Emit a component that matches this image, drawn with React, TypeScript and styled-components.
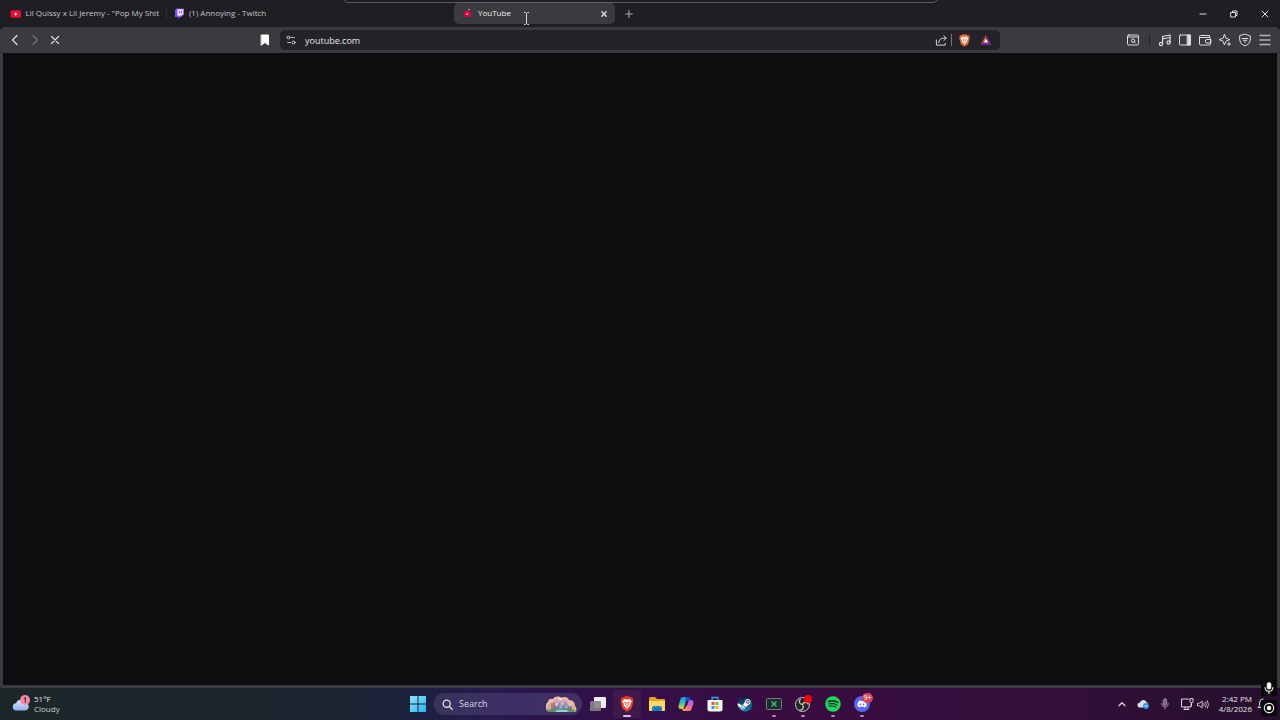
import React from "react";
import styled, { createGlobalStyle } from "styled-components";
import { FaDiscord, FaSpotify } from "react-icons/fa";

const GlobalStyle = createGlobalStyle`
  * { box-sizing: border-box; }
  body {
    margin: 0;
    background: #0e0e10;
    color: #e6e5e8;
    font-family: "Open Sans", "Noto Sans", sans-serif;
    font-size: 8px;
    line-height: 10px;
  }
  button, input { font: inherit; color: inherit; }
`;

const Desktop = styled.div`
  position: relative;
  display: flex;
  flex-direction: column;
  min-height: 100vh;
  overflow: hidden;
`;

const Browser = styled.div`
  flex: 1;
  display: flex;
  flex-direction: column;
  background: #1f1e23;
`;

const ShareBar = styled.div`
  position: absolute;
  top: -8px;
  left: 50%;
  width: 595px;
  height: 11px;
  margin-left: -297px;
  border: 1px solid #5d5c61;
  border-radius: 5px;
  background: #1f1e23;
`;

const TabStrip = styled.div`
  display: flex;
  align-items: center;
  height: 27px;
`;

const Tab = styled.div<{ $active?: boolean }>`
  display: flex;
  align-items: center;
  gap: 4px;
  width: 161px;
  height: 21px;
  padding: 0 6px;
  border-radius: 5px;
  color: ${(p) => (p.$active ? "#f2f1f4" : "#c6c5ca")};
  background: ${(p) => (p.$active ? "#3b3a3f" : "transparent")};
`;

const Tabs = styled.div`
  display: flex;
  align-items: center;
  gap: 1px;
  flex: none;
  width: 454px;
  padding-left: 4px;
`;

const TabLink = styled.a`
  flex: 1;
  padding-bottom: 2px;
  color: inherit;
  text-decoration: none;
  white-space: nowrap;
`;

const Divider = styled.span<{ $color: string }>`
  flex: none;
  width: 1px;
  height: 12px;
  background: ${(p) => p.$color};
`;

const IconButton = styled.button<{ $width?: number; $dim?: boolean }>`
  display: flex;
  align-items: center;
  justify-content: center;
  flex: none;
  width: ${(p) => p.$width ?? 20}px;
  height: 20px;
  padding: 0;
  border: 0;
  background: transparent;
  color: ${(p) => (p.$dim ? "#77767b" : "#dddce0")};
`;

const WindowControls = styled.div`
  display: flex;
  margin-left: auto;
`;

const Toolbar = styled.div`
  display: grid;
  grid-template-columns: 1fr minmax(0, 720px) 1fr;
  align-items: center;
  height: 26px;
  border-radius: 5px 5px 0 0;
  background: #3b3a3f;
`;

const ToolGroup = styled.div<{ $end?: boolean }>`
  display: flex;
  align-items: center;
  justify-content: ${(p) => (p.$end ? "flex-end" : "space-between")};
  padding: 0 5px;
`;

const Row = styled.div`
  display: flex;
  align-items: center;
`;

const DividerSlot = styled.span`
  display: flex;
  justify-content: center;
  width: 12px;
`;

const AddressBar = styled.form`
  display: flex;
  align-items: center;
  height: 20px;
  padding: 0 4px 0 1px;
  border-radius: 5px;
  background: #242329;
`;

const AddressInput = styled.input`
  flex: 1;
  min-width: 0;
  height: 18px;
  padding: 0 0 0 4px;
  border: 0;
  outline: 0;
  background: transparent;
  font-size: 9px;
`;

const Page = styled.main`
  flex: 1;
  border: solid #3b3a3f;
  border-width: 0 3px 3px;
  background: #0e0e10;
`;

const Taskbar = styled.footer`
  display: grid;
  grid-template-columns: 1fr auto 1fr;
  align-items: center;
  height: 32px;
  background: linear-gradient(90deg, #1d2628 0%, #1b2530 26%, #1c2140 33%, #281a4e 38%, #330f48 48%, #380d40 62%, #340f3b 80%, #260f2c 100%);
`;

const Weather = styled.button`
  display: flex;
  align-items: center;
  gap: 4px;
  justify-self: start;
  height: 32px;
  padding: 0 12px;
  border: 0;
  background: transparent;
  text-align: left;
`;

const Muted = styled.span`
  color: #c9ccce;
`;

const Stack = styled.span<{ $right?: boolean }>`
  display: flex;
  flex-direction: column;
  text-align: ${(p) => (p.$right ? "right" : "left")};
`;

const Dock = styled.nav`
  display: flex;
  align-items: center;
  gap: 2px;
`;

const SearchBox = styled.label`
  display: flex;
  align-items: center;
  gap: 6px;
  width: 148px;
  height: 22px;
  padding: 0 4px 0 8px;
  border-radius: 11px;
  background: linear-gradient(90deg, #38335c, #3d2f66 60%, #43305f);
`;

const SearchInput = styled.input`
  flex: 1;
  min-width: 0;
  padding: 0;
  border: 0;
  outline: 0;
  background: transparent;
  font-size: 9px;
  &::placeholder { color: #dcd6e6; opacity: 1; }
`;

const Apps = styled.div`
  display: flex;
  justify-content: space-between;
  width: 292px;
`;

const AppButton = styled.button<{ $state?: "open" | "active" }>`
  position: relative;
  display: flex;
  align-items: center;
  justify-content: center;
  width: 28px;
  height: 28px;
  padding: 0;
  border: 0;
  border-radius: 3px;
  background: ${(p) => (p.$state === "active" ? "#3d1a49" : "transparent")};
  &::after {
    content: "";
    display: ${(p) => (p.$state ? "block" : "none")};
    position: absolute;
    bottom: 1px;
    width: ${(p) => (p.$state === "active" ? 8 : 4)}px;
    height: 2px;
    border-radius: 1px;
    background: ${(p) => (p.$state === "active" ? "#e3b9e8" : "#a58fab")};
  }
`;

const Badge = styled.span`
  position: absolute;
  top: 3px;
  right: 3px;
  width: 11px;
  height: 10px;
  border-radius: 5px;
  background: #d8435a;
  color: #fff;
  font-size: 7px;
  text-align: center;
`;

const Tray = styled.div`
  display: flex;
  align-items: center;
  justify-content: flex-end;
  padding-right: 10px;
`;

const Clock = styled.time`
  margin: 0 4px 0 10px;
`;

const CaptureStatus = styled.div`
  position: absolute;
  right: 3px;
  bottom: 4px;
  display: flex;
  flex-direction: column;
  gap: 4px;
`;

const StatusTile = styled.span`
  display: flex;
  align-items: center;
  justify-content: center;
  width: 16px;
  height: 16px;
  background: #0b090c;
`;

const Pointer = styled.svg`
  position: absolute;
  top: 12px;
  left: 523px;
`;

type IconProps = { size?: number; children: React.ReactNode; width?: number };
const Icon = ({ size = 14, children, width = 1 }: IconProps) => (
  <svg width={size} height={size} viewBox="0 0 14 14" fill="none" stroke="currentColor" strokeWidth={width} strokeLinecap="round" strokeLinejoin="round" aria-hidden="true">
    {children}
  </svg>
);

const YouTubeIcon = () => (
  <svg width="12" height="10" viewBox="0 0 12 10" aria-hidden="true">
    <rect x="0.5" y="1" width="11" height="8" rx="2" fill="#f00939" />
    <path d="M5 3.3v3.4L8 5z" fill="#fff" />
  </svg>
);

const TwitchIcon = () => (
  <svg width="11" height="12" viewBox="0 0 11 12" aria-hidden="true">
    <path d="M2.500 0.500H10v6L7.500 9H6l-2 2V9H1V2z" fill="#8447f0" />
    <path d="M3.300 1.300h6v4.600L7.600 7.400H6L4.700 8.600V7.400H3.300z" fill="#e9dffb" />
    <path d="M5.300 3v2.300M7.500 3v2.300" stroke="#8447f0" />
  </svg>
);

const LoadingIcon = () => (
  <svg width="14" height="12" viewBox="0 0 14 12" aria-hidden="true">
    <rect x="4" y="3" width="7" height="6" rx="1" fill="#cb083f" />
    <path d="M6.500 4.800v2.400L8.700 6z" fill="#f5b6c6" />
    <circle cx="9" cy="1.500" r="0.800" fill="#bbb" />
  </svg>
);

const BatIcon = () => (
  <svg width="12" height="12" viewBox="0 0 12 12" aria-hidden="true">
    <path d="M6 1 0.500 11 6 7z" fill="#ec4b32" />
    <path d="M6 1 11.500 11 7.500 8z" fill="#9e2a8c" />
    <path d="M0.500 11h11L8 8H4z" fill="#662d91" />
    <path d="M6 4.600 3.800 8.600h4.400z" fill="#fff" />
  </svg>
);

const BraveIcon = ({ size, color }: { size: number; color: string }) => (
  <svg width={size} height={size} viewBox="0 0 24 24" aria-hidden="true">
    <path d="M7 2 9 0.500h6L17 2l2.500-.3L21.500 4l-.6 2 .8 2-2.500 9.500q-.4 1.500-1.700 2.400L12 23.500l-5.500-3.600q-1.300-.9-1.700-2.400L2.300 8l.8-2-.6-2 2-2.300z" fill={color} />
    <path d="M8 4.500 12 5.500l4-1 3.300 3.700-2.800 4.300 1 1.500-2.500 2.300L12 19.500l-3-3.200L6.500 14l1-1.500-2.800-4.300z" fill="#fff" />
    <path d="M7.800 9l3 1-.8 3.200M16.200 9l-3 1 .8 3.200M10 14.500l2 1 2-1" fill="none" stroke={color} strokeWidth="1.400" />
  </svg>
);

const WeatherIcon = () => (
  <svg width="18" height="18" viewBox="0 0 18 18" aria-hidden="true">
    <defs>
      <linearGradient id="cloud" x1="0" y1="0" x2="0" y2="1">
        <stop offset="0" stopColor="#dce8fb" />
        <stop offset="1" stopColor="#8db0ef" />
      </linearGradient>
    </defs>
    <path d="M4.500 15.500a3.600 3.600 0 0 1-.3-7.200 4.500 4.500 0 0 1 8.600-.2 3.700 3.700 0 0 1 .4 7.400z" fill="url(#cloud)" />
    <circle cx="13" cy="5" r="5" fill="#f48aa6" />
    <path d="M11.800 3.500 13.300 2.500V7.700" fill="none" stroke="#3b2030" />
  </svg>
);

const StartIcon = () => (
  <svg width="16" height="16" viewBox="0 0 16 16" aria-hidden="true">
    <defs>
      <linearGradient id="win" x1="0" y1="0" x2="1" y2="1">
        <stop offset="0" stopColor="#8be5fb" />
        <stop offset="1" stopColor="#2fb4ee" />
      </linearGradient>
    </defs>
    <path d="M0 0h7.500v7.500H0zM8.500 0H16v7.500H8.500zM0 8.500h7.500V16H0zM8.500 8.500H16V16H8.500z" fill="url(#win)" />
  </svg>
);

const SearchArt = () => (
  <svg width="33" height="18" viewBox="0 0 33 18" aria-hidden="true">
    <path d="M2 16C0 12 1 8 3 7c0-3 3-4 5-3 2-3 6-3 8-1 3-2 7-1 8 2 4 0 6 3 6 6 2 2 2 5 0 6z" fill="#e9bba9" />
    <path d="M9 6c1-3 5-3 7-1 3-2 6 0 7 2l-3 2-4-2-4 2z" fill="#cda0c4" />
    <path d="M8 15l2-5 2 2 3-5 3 4 3-4 3 4 3 4z" fill="#6f7cab" />
    <path d="M15 7l2 3 1 5h-4zM21 7l2 4-1 4h-3z" fill="#a3a6cb" />
    <path d="M12 4l3-2 3 2-2 2z" fill="#f7dab0" />
    <path d="M1 15c4-2 7 0 11-1s12-1 19 1l-2 2H3z" fill="#5f9463" />
    <path d="M12 15h9l3 2H10z" fill="#8fd2de" />
    <path d="M3 10l2-2 1 6-2 1-2-2zM27 9l2 1 1 4-2 1z" fill="#dfa48e" />
    <path d="M7 8v7M9 7v7M26 11v4" stroke="#57465f" />
  </svg>
);

const TaskViewIcon = () => (
  <svg width="18" height="16" viewBox="0 0 18 16" aria-hidden="true">
    <rect x="5" y="1" width="12" height="11" rx="1" fill="#f1edf2" />
    <rect x="1" y="5" width="11" height="10" rx="1" fill="#8a8389" opacity="0.900" />
  </svg>
);

const FolderIcon = () => (
  <svg width="18" height="16" viewBox="0 0 18 16" aria-hidden="true">
    <path d="M1 2.500Q1 1 2.500 1H7l2 2h7q1 0 1 1v3H1z" fill="#e5a52b" />
    <path d="M1 5h16v9q0 1-1 1H2q-1 0-1-1z" fill="#ffd765" />
    <path d="M4 15v-3q0-2 2-2h6q2 0 2 2v3z" fill="#2384cd" />
    <path d="M6 13h6" stroke="#145c9e" />
  </svg>
);

const CopilotIcon = () => (
  <svg width="16" height="16" viewBox="0 0 16 16" aria-hidden="true">
    <defs>
      <linearGradient id="copA" x1="0" y1="0" x2="0" y2="1">
        <stop offset="0" stopColor="#2a8cf0" />
        <stop offset="0.500" stopColor="#38c3a6" />
        <stop offset="1" stopColor="#f5cf43" />
      </linearGradient>
      <linearGradient id="copB" x1="0" y1="0" x2="0" y2="1">
        <stop offset="0" stopColor="#8c6bf5" />
        <stop offset="0.500" stopColor="#e45fb5" />
        <stop offset="1" stopColor="#fa8760" />
      </linearGradient>
    </defs>
    <path d="M5 1h5.500Q9 1.500 8.500 3L6 11.500Q5.500 13 4 13H3Q0 13 .6 9.500L2.500 3Q3 1 5 1z" fill="url(#copA)" />
    <path d="M8 1h2.500q1.500 0 2 2l.5 1.500h-2.500q-1.500 0-2 1.500L7 8z" fill="#1b50c4" />
    <path d="M11 15H6q1.500-.5 2-2l2.300-7.500Q10.800 4 12 4h1q3 0 2.400 3.500L13.500 13q-.5 2-2.500 2z" fill="url(#copB)" />
    <path d="M7.500 15H6q-1.500 0-2-2h1.500Q7 13 7.500 11.500L9 9v2.500z" fill="#f6a24c" />
  </svg>
);

const StoreIcon = () => (
  <svg width="16" height="16" viewBox="0 0 16 16" aria-hidden="true">
    <path d="M5 4V1.500h6V4" fill="none" stroke="#3aa2e8" strokeWidth="1.300" />
    <path d="M0.500 4h15v9q0 2.500-2.500 2.500H3Q.5 15.500.5 13z" fill="#f4f5f8" />
    <path d="M4.500 6h3v3h-3z" fill="#f2502b" />
    <path d="M8.500 6h3v3h-3z" fill="#7fba1c" />
    <path d="M4.500 10h3v3h-3z" fill="#1a9fe8" />
    <path d="M8.500 10h3v3h-3z" fill="#fbb713" />
  </svg>
);

const SteamIcon = () => (
  <svg width="16" height="16" viewBox="0 0 16 16" aria-hidden="true">
    <defs>
      <linearGradient id="steam" x1="0" y1="0" x2="0" y2="1">
        <stop offset="0" stopColor="#151a3a" />
        <stop offset="1" stopColor="#1684b9" />
      </linearGradient>
    </defs>
    <circle cx="8" cy="8" r="7.500" fill="url(#steam)" />
    <path d="M0.600 7.300 4.500 9l1.500-.2 2.300-3.300 4 2.800-3.800 2.900a2.600 2.600 0 0 1-5.100.2L.9 10z" fill="#fff" />
    <circle cx="10.700" cy="5.800" r="2.900" fill="#fff" />
    <circle cx="10.700" cy="5.800" r="1.700" fill="#b9c4d6" stroke="#24406c" strokeWidth="0.700" />
    <circle cx="6" cy="10.900" r="1.500" fill="#fff" stroke="#24567c" strokeWidth="0.700" />
  </svg>
);

const XboxBarIcon = () => (
  <svg width="16" height="12" viewBox="0 0 16 12" aria-hidden="true">
    <rect x="0.500" y="0.500" width="15" height="11" rx="1" fill="#183029" stroke="#6f7d76" />
    <path d="M5.500 3.500l5 5M10.500 3.500l-5 5" stroke="#62b588" strokeWidth="1.200" />
  </svg>
);

const ObsIcon = () => (
  <svg width="18" height="18" viewBox="0 0 18 18" aria-hidden="true">
    <circle cx="8.500" cy="9.500" r="7" fill="#262427" stroke="#c9c6ca" />
    <path d="M8.500 9.500C5 9 4.500 6 6.500 4M8.500 9.500c1.500-3 4.500-3 6 0M8.500 9.500c2 3 0 6-3 5.500" fill="none" stroke="#c9c6ca" strokeWidth="1.300" />
    <circle cx="14" cy="4" r="4" fill="#f2060e" />
  </svg>
);

const SpotifyIcon = () => (
  <svg width="16" height="16" viewBox="0 0 16 16" aria-hidden="true">
    <circle cx="8" cy="8" r="7" fill="#10291a" />
    <FaSpotify size={16} color="#1ed760" />
  </svg>
);

const DiscordIcon = () => (
  <svg width="16" height="16" viewBox="0 0 16 16" aria-hidden="true">
    <circle cx="8" cy="8" r="8" fill="#5865f2" />
    <FaDiscord x={3} y={3} size={10} color="#fff" />
  </svg>
);

const OneDriveIcon = () => (
  <svg width="14" height="14" viewBox="0 0 14 14" aria-hidden="true">
    <path d="M3 10.500a2.500 2.500 0 0 1 0-5 3.500 3.500 0 0 1 6.500-.5A2.800 2.800 0 0 1 11 8v2.500z" fill="#e1dbe4" />
    <circle cx="9" cy="9" r="3" fill="#2c8fde" />
    <path d="M7.600 9h2.800" stroke="#fff" />
  </svg>
);

export default function App() {
  return (
    <Desktop>
      <GlobalStyle />
      <Browser>
        <TabStrip>
          <Tabs>
            <Tab>
              <YouTubeIcon />
              <TabLink href="#">Lil Quissy x Lil Jeremy - "Pop My Shit</TabLink>
            </Tab>
            <Divider $color="#2e2d32" />
            <Tab>
              <TwitchIcon />
              <TabLink href="#">(1) Annoying - Twitch</TabLink>
            </Tab>
          </Tabs>
          <Tab $active>
            <LoadingIcon />
            <TabLink href="#">YouTube</TabLink>
            <IconButton $width={10} aria-label="Close tab">
              <Icon size={10} width={2}><path d="M4 4l6 6M10 4l-6 6" /></Icon>
            </IconButton>
          </Tab>
          <IconButton $width={28} $dim aria-label="New tab">
            <Icon size={12} width={1.2}><path d="M7 3v8M3 7h8" stroke="#aaa9ae" /></Icon>
          </IconButton>
          <WindowControls>
            <IconButton $width={31} aria-label="Minimize"><Icon><path d="M4 7h6" /></Icon></IconButton>
            <IconButton $width={31} aria-label="Restore">
              <Icon><path d="M4 5.500h4.500V10H4zM5.500 5.500V4H10v4.500H8.500" /></Icon>
            </IconButton>
            <IconButton $width={31} aria-label="Close"><Icon><path d="M4 4l6 6M10 4l-6 6" /></Icon></IconButton>
          </WindowControls>
        </TabStrip>
        <Toolbar>
          <ToolGroup>
            <Row>
              <IconButton aria-label="Back"><Icon width={1.2}><path d="M9 2.500 4.500 7 9 11.500" /></Icon></IconButton>
              <IconButton $dim aria-label="Forward"><Icon width={1.2}><path d="M5 2.500 9.500 7 5 11.500" /></Icon></IconButton>
              <IconButton aria-label="Stop loading"><Icon width={1.2}><path d="M3.500 3.500l7 7M10.500 3.500l-7 7" /></Icon></IconButton>
            </Row>
            <IconButton aria-label="Bookmark">
              <Icon><path d="M3.500 2h7v10L7 9.500 3.500 12z" fill="#fff" stroke="#fff" /></Icon>
            </IconButton>
          </ToolGroup>
          <AddressBar>
            <IconButton type="button" aria-label="Site settings">
              <Icon size={12}>
                <circle cx="4" cy="4" r="1.700" /><path d="M7.500 4H11M3 10h3.500" /><circle cx="10" cy="10" r="1.700" />
              </Icon>
            </IconButton>
            <AddressInput aria-label="Address" defaultValue="youtube.com" />
            <IconButton type="button" aria-label="Share">
              <Icon size={13}><path d="M1.500 6.500V12h9.500V10M4 9.500c0-3 2-5 5-5H12M9.500 2 12 4.500 9.500 7" /></Icon>
            </IconButton>
            <Divider $color="#77767b" />
            <IconButton type="button" $width={24} aria-label="Brave Shields"><BraveIcon size={13} color="#e8602c" /></IconButton>
            <IconButton type="button" aria-label="Brave Rewards"><BatIcon /></IconButton>
          </AddressBar>
          <ToolGroup $end>
            <IconButton aria-label="Search tabs">
              <Icon>
                <rect x="1.500" y="2" width="11" height="10" rx="1.200" /><path d="M1.500 4h11M9.500 10l-1.200-1.200" /><circle cx="7" cy="7.700" r="1.700" />
              </Icon>
            </IconButton>
            <DividerSlot><Divider $color="#222126" /></DividerSlot>
            <IconButton aria-label="Media">
              <Icon width={1.2}>
                <circle cx="3" cy="11" r="1.600" /><circle cx="10.500" cy="9.500" r="1.600" /><path d="M4.600 11V3.500L12.100 2v7.500M4.600 6 12.100 4.500" />
              </Icon>
            </IconButton>
            <IconButton aria-label="Sidebar">
              <Icon><rect x="1.500" y="2" width="11" height="10" rx="1" /><path d="M9.500 2h3v10h-3z" fill="currentColor" /></Icon>
            </IconButton>
            <IconButton aria-label="Wallet">
              <Icon>
                <path d="M11.500 4.500v-2h-9Q1.500 2.500 1.500 4v7q0 1 1 1h9q1 0 1-1V5.500q0-1-1-1H2.500M12.500 6.500H9a1.700 1.700 0 0 0 0 3.500h3.500z" />
              </Icon>
            </IconButton>
            <IconButton aria-label="Leo AI">
              <Icon>
                <path d="M6.500 1.500 8 5.200l3.800 1.500L8 8.200 6.500 12 5 8.200 1.200 6.700 5 5.200z" /><path d="M11 9.500v3M9.500 11h3" />
              </Icon>
            </IconButton>
            <IconButton aria-label="VPN">
              <Icon>
                <path d="M7 1.200 12.300 3v4q0 4-5.300 6-5.300-2-5.300-6V3z" /><path d="M4.200 5.500h5.600M5.200 7.300h3.600M6.500 9h1" />
              </Icon>
            </IconButton>
            <IconButton aria-label="Menu"><Icon width={1.3}><path d="M2 2.500h10M2 7h10M2 11.500h10" stroke="#b2b1b6" /></Icon></IconButton>
          </ToolGroup>
        </Toolbar>
        <Page />
      </Browser>
      <Taskbar>
        <Weather>
          <WeatherIcon />
          <Stack><span>51°F</span><Muted>Cloudy</Muted></Stack>
        </Weather>
        <Dock>
          <AppButton aria-label="Start"><StartIcon /></AppButton>
          <SearchBox>
            <Icon size={11} width={1.6}><circle cx="6" cy="6" r="4.500" /><path d="M9.500 9.500 13 13" /></Icon>
            <SearchInput aria-label="Search" placeholder="Search" />
            <SearchArt />
          </SearchBox>
          <Apps>
            <AppButton aria-label="Task view"><TaskViewIcon /></AppButton>
            <AppButton $state="active" aria-label="Brave"><BraveIcon size={16} color="#ea3a24" /></AppButton>
            <AppButton aria-label="File Explorer"><FolderIcon /></AppButton>
            <AppButton aria-label="Copilot"><CopilotIcon /></AppButton>
            <AppButton aria-label="Microsoft Store"><StoreIcon /></AppButton>
            <AppButton aria-label="Steam"><SteamIcon /></AppButton>
            <AppButton $state="open" aria-label="Game Bar"><XboxBarIcon /></AppButton>
            <AppButton $state="open" aria-label="OBS Studio"><ObsIcon /></AppButton>
            <AppButton $state="open" aria-label="Spotify"><SpotifyIcon /></AppButton>
            <AppButton $state="open" aria-label="Discord"><DiscordIcon /><Badge>9+</Badge></AppButton>
          </Apps>
        </Dock>
        <Tray>
          <IconButton $width={26} aria-label="Hidden icons"><Icon size={12} width={1.4}><path d="M3.500 9 7 5.500 10.500 9" /></Icon></IconButton>
          <IconButton $width={18} aria-label="OneDrive"><OneDriveIcon /></IconButton>
          <IconButton $width={24} aria-label="Microphone">
            <Icon size={12}><g stroke="#a597a9"><rect x="5" y="1" width="4" height="7.500" rx="2" fill="#75667a" /><path d="M3 6.500a4 4 0 0 0 8 0M7 10.500V13" /></g></Icon>
          </IconButton>
          <IconButton aria-label="Network">
            <Icon><path d="M8.500 2H1.500v8H11V7.500M4 12.500h5M5 10v2.500M8 10v2.500M11.500 6v3M10 2v2.500q0 1.500 1.500 1.500T13 4.500V2z" /></Icon>
          </IconButton>
          <IconButton $width={12} aria-label="Volume">
            <Icon size={13}><path d="M1 5.500h2L6 3v8L3 8.500H1zM8 5.500q1 1.500 0 3M10 4q2 3 0 6M12 2.500q3 4.500 0 9" /></Icon>
          </IconButton>
          <Clock dateTime="2026-04-08T14:42"><Stack $right><span>2:42 PM</span><span>4/8/2026</span></Stack></Clock>
          <IconButton $width={14} aria-label="Notifications">
            <Icon><path d="M7 2Q3.500 2 3.500 6v2.500L2 10.500h10M5.500 12h3" /></Icon>
          </IconButton>
        </Tray>
      </Taskbar>
      <ShareBar />
      <CaptureStatus>
        <StatusTile>
          <Icon size={12} width={1.4}><rect x="5" y="1" width="4" height="7" rx="2" fill="#fff" /><path d="M2.500 6.500a4.500 4.500 0 0 0 9 0M7 11v2.500" /></Icon>
        </StatusTile>
        <StatusTile>
          <Icon size={12} width={1.4}><circle cx="7" cy="7" r="5.500" /><circle cx="7" cy="7" r="2" fill="#fff" /></Icon>
        </StatusTile>
      </CaptureStatus>
      <Pointer width="7" height="13" viewBox="0 0 7 13" aria-hidden="true">
        <path d="M1 .5h1.500l1 1 1-1H6M3.500 1.500v10M1 12.500h1.500l1-1 1 1H6" fill="none" stroke="#dcdbe0" />
      </Pointer>
    </Desktop>
  );
}
